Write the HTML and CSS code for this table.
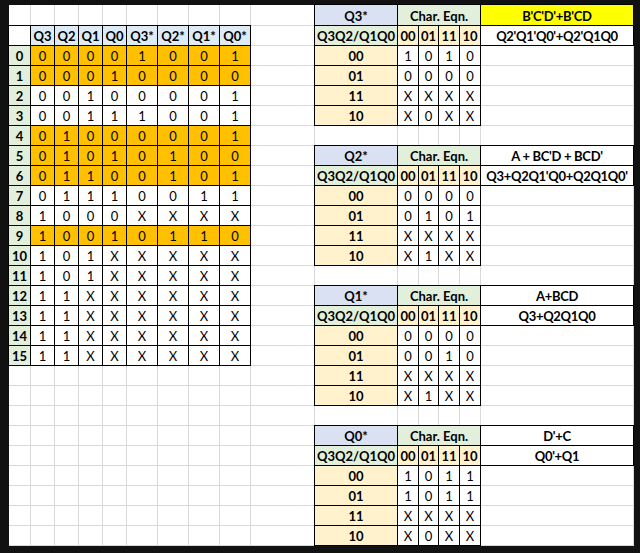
FILE: index.html
```html
<!DOCTYPE html>
<html lang="en">
<head>
<meta charset="utf-8">
<title>Counter design sheet</title>
<link rel="stylesheet" href="styles.css">
</head>
<body>
<main class="sheet">
  <section class="truth">
    <div class="tr head"><div class="c corner"></div><div class="c h">Q3</div><div class="c h">Q2</div><div class="c h">Q1</div><div class="c h">Q0</div><div class="c h">Q3*</div><div class="c h">Q2*</div><div class="c h">Q1*</div><div class="c h">Q0*</div></div>
    <div class="tr hl"><div class="c n">0</div><div class="c v">0</div><div class="c v">0</div><div class="c v">0</div><div class="c v">0</div><div class="c v">1</div><div class="c v">0</div><div class="c v">0</div><div class="c v">1</div></div>
    <div class="tr hl"><div class="c n">1</div><div class="c v">0</div><div class="c v">0</div><div class="c v">0</div><div class="c v">1</div><div class="c v">0</div><div class="c v">0</div><div class="c v">0</div><div class="c v">0</div></div>
    <div class="tr"><div class="c n">2</div><div class="c v">0</div><div class="c v">0</div><div class="c v">1</div><div class="c v">0</div><div class="c v">0</div><div class="c v">0</div><div class="c v">0</div><div class="c v">1</div></div>
    <div class="tr"><div class="c n">3</div><div class="c v">0</div><div class="c v">0</div><div class="c v">1</div><div class="c v">1</div><div class="c v">1</div><div class="c v">0</div><div class="c v">0</div><div class="c v">1</div></div>
    <div class="tr hl"><div class="c n">4</div><div class="c v">0</div><div class="c v">1</div><div class="c v">0</div><div class="c v">0</div><div class="c v">0</div><div class="c v">0</div><div class="c v">0</div><div class="c v">1</div></div>
    <div class="tr hl"><div class="c n">5</div><div class="c v">0</div><div class="c v">1</div><div class="c v">0</div><div class="c v">1</div><div class="c v">0</div><div class="c v">1</div><div class="c v">0</div><div class="c v">0</div></div>
    <div class="tr hl"><div class="c n">6</div><div class="c v">0</div><div class="c v">1</div><div class="c v">1</div><div class="c v">0</div><div class="c v">0</div><div class="c v">1</div><div class="c v">0</div><div class="c v">1</div></div>
    <div class="tr"><div class="c n">7</div><div class="c v">0</div><div class="c v">1</div><div class="c v">1</div><div class="c v">1</div><div class="c v">0</div><div class="c v">0</div><div class="c v">1</div><div class="c v">1</div></div>
    <div class="tr"><div class="c n">8</div><div class="c v">1</div><div class="c v">0</div><div class="c v">0</div><div class="c v">0</div><div class="c v">X</div><div class="c v">X</div><div class="c v">X</div><div class="c v">X</div></div>
    <div class="tr hl"><div class="c n">9</div><div class="c v">1</div><div class="c v">0</div><div class="c v">0</div><div class="c v">1</div><div class="c v">0</div><div class="c v">1</div><div class="c v">1</div><div class="c v">0</div></div>
    <div class="tr"><div class="c n">10</div><div class="c v">1</div><div class="c v">0</div><div class="c v">1</div><div class="c v">X</div><div class="c v">X</div><div class="c v">X</div><div class="c v">X</div><div class="c v">X</div></div>
    <div class="tr"><div class="c n">11</div><div class="c v">1</div><div class="c v">0</div><div class="c v">1</div><div class="c v">X</div><div class="c v">X</div><div class="c v">X</div><div class="c v">X</div><div class="c v">X</div></div>
    <div class="tr"><div class="c n">12</div><div class="c v">1</div><div class="c v">1</div><div class="c v">X</div><div class="c v">X</div><div class="c v">X</div><div class="c v">X</div><div class="c v">X</div><div class="c v">X</div></div>
    <div class="tr"><div class="c n">13</div><div class="c v">1</div><div class="c v">1</div><div class="c v">X</div><div class="c v">X</div><div class="c v">X</div><div class="c v">X</div><div class="c v">X</div><div class="c v">X</div></div>
    <div class="tr"><div class="c n">14</div><div class="c v">1</div><div class="c v">1</div><div class="c v">X</div><div class="c v">X</div><div class="c v">X</div><div class="c v">X</div><div class="c v">X</div><div class="c v">X</div></div>
    <div class="tr"><div class="c n">15</div><div class="c v">1</div><div class="c v">1</div><div class="c v">X</div><div class="c v">X</div><div class="c v">X</div><div class="c v">X</div><div class="c v">X</div><div class="c v">X</div></div>
  </section>

  <section class="kmap at1">
    <div class="c title">Q3*</div><div class="c eqn">Char. Eqn.</div>
    <div class="c axis">Q3Q2/Q1Q0</div><div class="c col">00</div><div class="c col">01</div><div class="c col">11</div><div class="c col">10</div>
    <div class="c rowl">00</div><div class="c v">1</div><div class="c v">0</div><div class="c v">1</div><div class="c v">0</div>
    <div class="c rowl">01</div><div class="c v">0</div><div class="c v">0</div><div class="c v">0</div><div class="c v">0</div>
    <div class="c rowl">11</div><div class="c v">X</div><div class="c v">X</div><div class="c v">X</div><div class="c v">X</div>
    <div class="c rowl">10</div><div class="c v">X</div><div class="c v">0</div><div class="c v">X</div><div class="c v">X</div>
  </section>
  <section class="expr at1">
    <div class="c ex mark">B'C'D'+B'CD</div>
    <div class="c ex">Q2'Q1'Q0'+Q2'Q1Q0</div>
  </section>

  <section class="kmap at8">
    <div class="c title">Q2*</div><div class="c eqn">Char. Eqn.</div>
    <div class="c axis">Q3Q2/Q1Q0</div><div class="c col">00</div><div class="c col">01</div><div class="c col">11</div><div class="c col">10</div>
    <div class="c rowl">00</div><div class="c v">0</div><div class="c v">0</div><div class="c v">0</div><div class="c v">0</div>
    <div class="c rowl">01</div><div class="c v">0</div><div class="c v">1</div><div class="c v">0</div><div class="c v">1</div>
    <div class="c rowl">11</div><div class="c v">X</div><div class="c v">X</div><div class="c v">X</div><div class="c v">X</div>
    <div class="c rowl">10</div><div class="c v">X</div><div class="c v">1</div><div class="c v">X</div><div class="c v">X</div>
  </section>
  <section class="expr at8">
    <div class="c ex">A + BC'D + BCD'</div>
    <div class="c ex">Q3+Q2Q1'Q0+Q2Q1Q0'</div>
  </section>

  <section class="kmap at15">
    <div class="c title">Q1*</div><div class="c eqn">Char. Eqn.</div>
    <div class="c axis">Q3Q2/Q1Q0</div><div class="c col">00</div><div class="c col">01</div><div class="c col">11</div><div class="c col">10</div>
    <div class="c rowl">00</div><div class="c v">0</div><div class="c v">0</div><div class="c v">0</div><div class="c v">0</div>
    <div class="c rowl">01</div><div class="c v">0</div><div class="c v">0</div><div class="c v">1</div><div class="c v">0</div>
    <div class="c rowl">11</div><div class="c v">X</div><div class="c v">X</div><div class="c v">X</div><div class="c v">X</div>
    <div class="c rowl">10</div><div class="c v">X</div><div class="c v">1</div><div class="c v">X</div><div class="c v">X</div>
  </section>
  <section class="expr at15">
    <div class="c ex">A+BCD</div>
    <div class="c ex">Q3+Q2Q1Q0</div>
  </section>

  <section class="kmap at22">
    <div class="c title">Q0*</div><div class="c eqn">Char. Eqn.</div>
    <div class="c axis">Q3Q2/Q1Q0</div><div class="c col">00</div><div class="c col">01</div><div class="c col">11</div><div class="c col">10</div>
    <div class="c rowl">00</div><div class="c v">1</div><div class="c v">0</div><div class="c v">1</div><div class="c v">1</div>
    <div class="c rowl">01</div><div class="c v">1</div><div class="c v">0</div><div class="c v">1</div><div class="c v">1</div>
    <div class="c rowl">11</div><div class="c v">X</div><div class="c v">X</div><div class="c v">X</div><div class="c v">X</div>
    <div class="c rowl">10</div><div class="c v">X</div><div class="c v">0</div><div class="c v">X</div><div class="c v">X</div>
  </section>
  <section class="expr at22">
    <div class="c ex">D'+C</div>
    <div class="c ex">Q0'+Q1</div>
  </section>
</main>
</body>
</html>
```

FILE: styles.css
```css
:root {
  --grid: #d9d9d9;
}

* { box-sizing: border-box; }

html, body {
  margin: 0;
  height: 100%;
}

body {
  background: #111111;
  padding: 5px 0 0 9px;
  font-family: Lato, "Liberation Sans", sans-serif;
  font-size: 13px;
  color: #000;
  overflow: hidden;
}

.sheet {
  display: grid;
  grid-template-columns: 21px 23px 23px 23px 23px 30px 30px 30px 30px 63px 82px 20px 19px 20px 20px 152px;
  grid-template-rows: 20px repeat(26, 19px);
  gap: 1px;
  padding: 0 1px 1px 0;
  width: 625px;
  height: 541px;
  background-color: #ffffff;
  background-image:
    linear-gradient(var(--grid), var(--grid)),
    linear-gradient(var(--grid), var(--grid)),
    linear-gradient(var(--grid), var(--grid)),
    linear-gradient(var(--grid), var(--grid)),
    linear-gradient(var(--grid), var(--grid)),
    linear-gradient(var(--grid), var(--grid)),
    linear-gradient(var(--grid), var(--grid)),
    linear-gradient(var(--grid), var(--grid)),
    linear-gradient(var(--grid), var(--grid)),
    linear-gradient(var(--grid), var(--grid)),
    linear-gradient(var(--grid), var(--grid)),
    linear-gradient(var(--grid), var(--grid)),
    linear-gradient(var(--grid), var(--grid)),
    linear-gradient(var(--grid), var(--grid)),
    linear-gradient(var(--grid), var(--grid)),
    linear-gradient(var(--grid), var(--grid)),
    repeating-linear-gradient(to bottom, var(--grid) 0 1px, transparent 1px 20px);
  background-size:
    1px 100%, 1px 100%, 1px 100%, 1px 100%, 1px 100%, 1px 100%, 1px 100%, 1px 100%,
    1px 100%, 1px 100%, 1px 100%, 1px 100%, 1px 100%, 1px 100%, 1px 100%, 1px 100%,
    100% 521px;
  background-position:
    21px 0, 45px 0, 69px 0, 93px 0, 117px 0, 148px 0, 179px 0, 210px 0,
    241px 0, 305px 0, 388px 0, 409px 0, 429px 0, 450px 0, 471px 0, 624px 0,
    0 20px;
  background-repeat: no-repeat;
}

/* generic cell */
.c {
  background: #ffffff;
  display: flex;
  align-items: center;
  justify-content: center;
  padding-top: 1px;
  line-height: 18px;
  white-space: nowrap;
  overflow: visible;
}

/* ---------- truth table ---------- */
.truth {
  grid-column: 1 / 10;
  grid-row: 2 / 19;
  display: grid;
  grid-template-columns: 21px 23px 23px 23px 23px 30px 30px 30px 30px;
  grid-template-rows: repeat(17, 19px);
  gap: 1px;
  background: #000;
  outline: 1px solid #000;
}

.tr { display: contents; }

.truth .h {
  background: #ddebf7;
  font-weight: 700;
}

.truth .n {
  background: #e2efda;
  font-weight: 700;
}

.tr.hl .v { background: #ffc000; }

/* ---------- K-maps ---------- */
.kmap {
  grid-column: 11 / 16;
  display: grid;
  grid-template-columns: 82px 20px 19px 20px 20px;
  grid-template-rows: 1fr repeat(5, 19px);
  gap: 1px;
  background: #000;
  outline: 1px solid #000;
}

.kmap .title {
  background: #d9e1f2;
  font-weight: 700;
}

.kmap .eqn {
  grid-column: span 4;
  background: #e2efda;
  font-weight: 700;
}

.kmap .axis {
  background: #e2efda;
  font-weight: 700;
}

.kmap .col,
.kmap .rowl {
  background: #fff2cc;
  font-weight: 700;
}

.expr {
  grid-column: 16 / 17;
  display: grid;
  grid-template-rows: 1fr 19px;
  gap: 1px;
  background: #000;
  outline: 1px solid #000;
}

.expr .ex {
  font-weight: 700;
  letter-spacing: -0.3px;
}
.expr .mark { background: #ffff00; }

.kmap.at1 { grid-row: 1 / 7; }
.kmap.at8 { grid-row: 8 / 14; }
.kmap.at15 { grid-row: 15 / 21; }
.kmap.at22 { grid-row: 22 / 28; }

.expr.at1 { grid-row: 1 / 3; }
.expr.at8 { grid-row: 8 / 10; }
.expr.at15 { grid-row: 15 / 17; }
.expr.at22 { grid-row: 22 / 24; }
```
